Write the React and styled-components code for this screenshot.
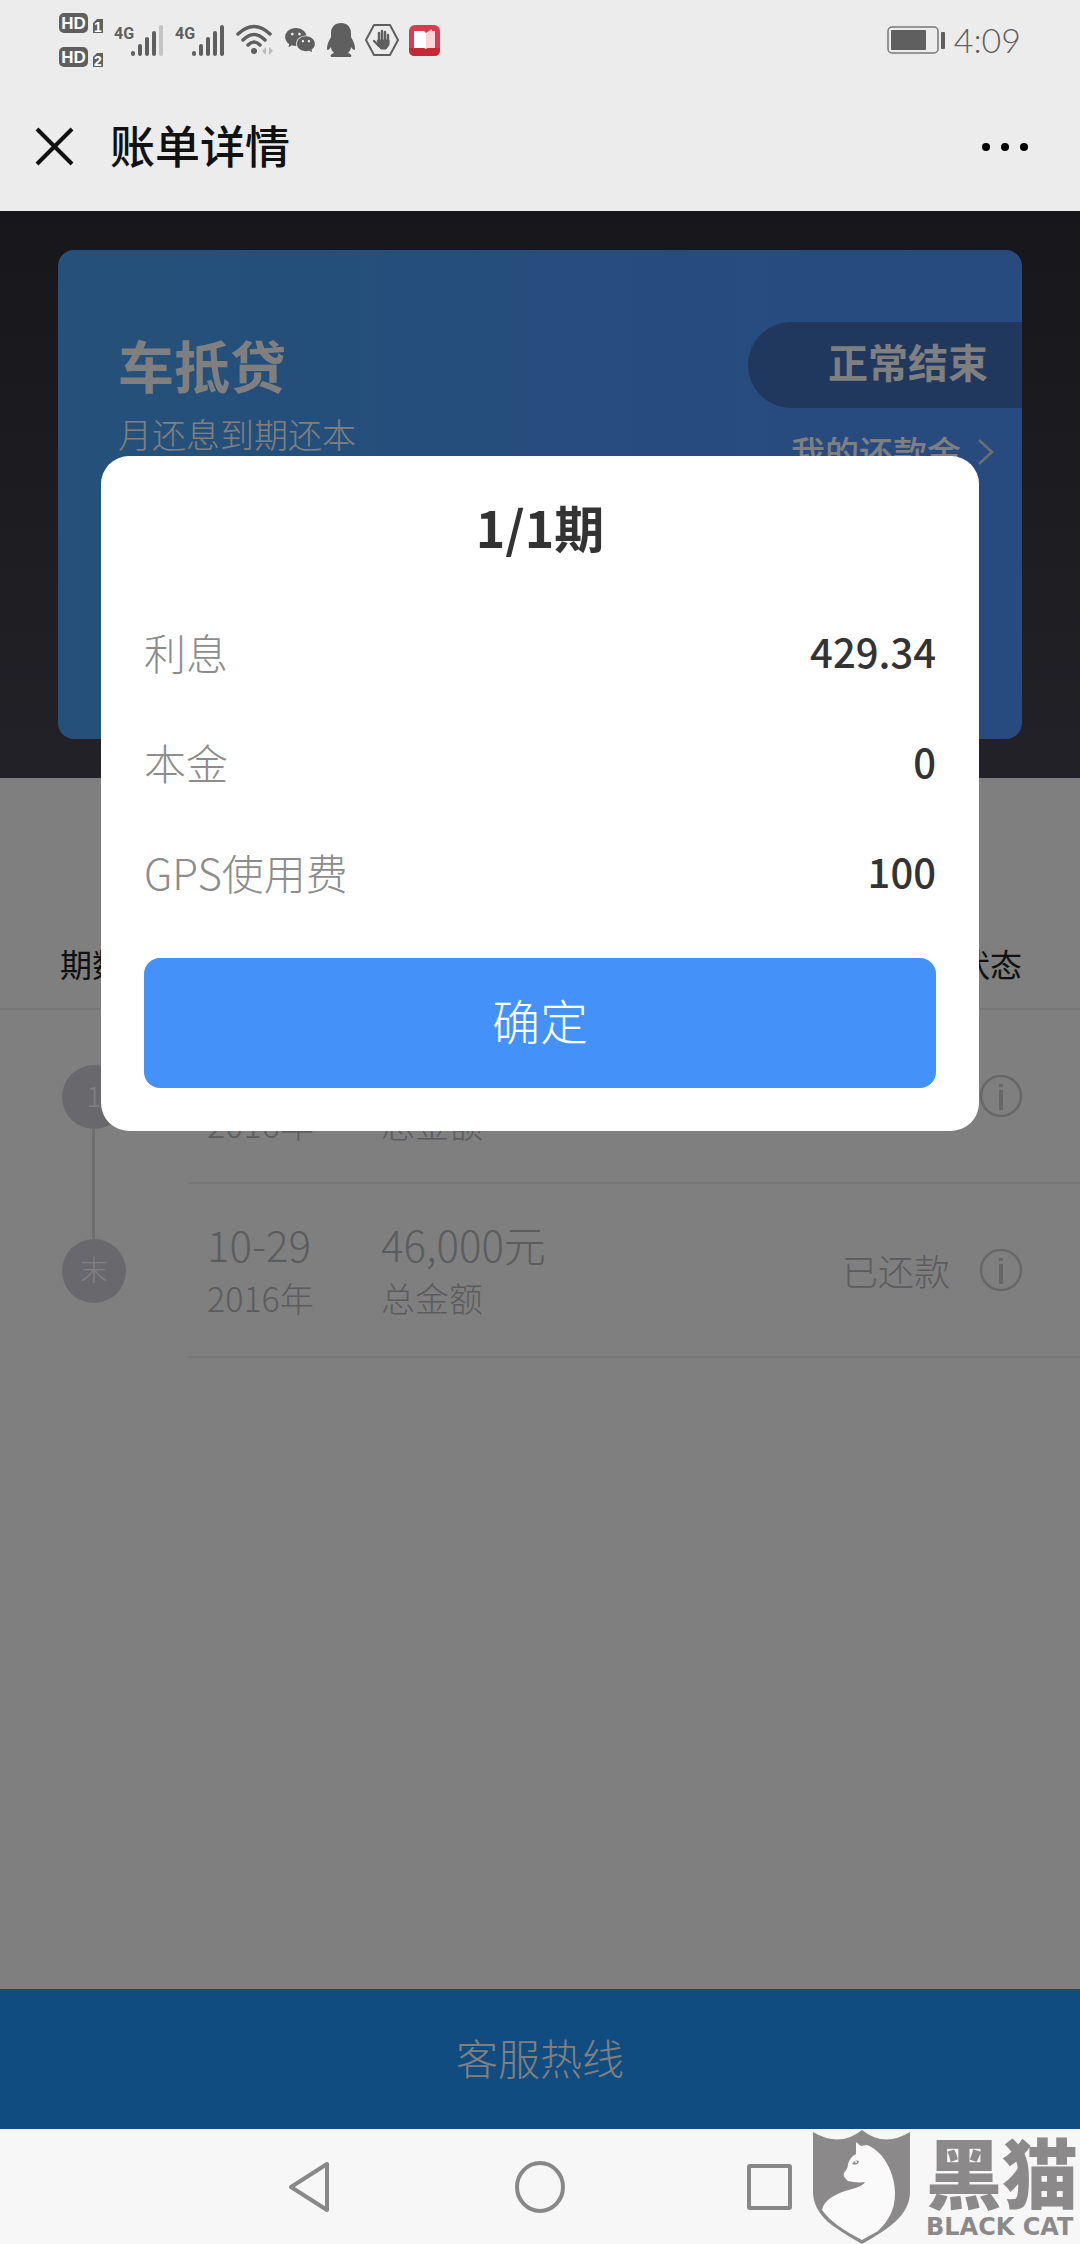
import React, { useState } from 'react'
import styled, { createGlobalStyle } from 'styled-components'
import { AiFillWechat } from 'react-icons/ai'

const GlobalStyle = createGlobalStyle`
  * {
    box-sizing: border-box;
  }

  body {
    margin: 0;
    background: #fff;
    font-family: "Noto Sans CJK SC", "Noto Sans", sans-serif;
    font-weight: 300;
  }

  button {
    padding: 0;
    border: 0;
    background: none;
    color: inherit;
    font: inherit;
    cursor: pointer;
  }

  svg {
    display: block;
    flex: none;
  }
`

const Screen = styled.div`
  position: relative;
  display: flex;
  flex-direction: column;
  min-height: 100vh;
  overflow: hidden;
`

const StatusBar = styled.div`
  display: flex;
  align-items: center;
  justify-content: space-between;
  height: 80px;
  padding: 0 59px;
  background: #ececec;
  color: #5f5f5f;
`

const StatusIcons = styled.div`
  display: flex;
  align-items: center;
  gap: 10px;
`

const Clock = styled.div`
  display: flex;
  align-items: center;
  gap: 8px;
  font-family: Lato, sans-serif;
  font-size: 34px;
  line-height: 40px;
`

const TitleBar = styled.header`
  display: flex;
  align-items: center;
  height: 131px;
  padding: 2px 51px 0 34px;
  background: #ececec;
  color: #111;

  h1 {
    flex: 1;
    margin: 0 0 4px 35px;
    font-size: 45px;
    font-weight: 500;
    line-height: 64px;
  }
`

const WebView = styled.div`
  position: relative;
  display: flex;
  flex: 1;
  flex-direction: column;
`

const Hero = styled.section`
  padding: 39px 58px;
  background: linear-gradient(#2f2e35, #44434f);
`

const LoanCard = styled.div`
  display: flex;
  justify-content: space-between;
  min-height: 489px;
  border-radius: 16px;
  background: linear-gradient(90deg, #48a2f4, #5094ff);
  color: #fff;
`

const LoanName = styled.div`
  padding: 82px 0 0 60px;

  h2 {
    margin: 0 0 18px;
    font-size: 56px;
    font-weight: 700;
    line-height: 64px;
  }

  p {
    margin: 0;
    font-size: 34px;
    line-height: 40px;
  }
`

const LoanStatus = styled.div`
  display: flex;
  flex-direction: column;
  align-items: flex-end;
  gap: 24px;
  padding-top: 72px;
`

const StatusPill = styled.div`
  padding: 0 34px 8px 80px;
  border-radius: 43px 0 0 43px;
  background: #4070bc;
  font-size: 40px;
  font-weight: 700;
  line-height: 78px;
`

const FundLink = styled.a`
  display: flex;
  align-items: center;
  gap: 16px;
  padding-right: 28px;
  color: #fff;
  font-size: 34px;
  font-weight: 500;
  line-height: 40px;
  text-decoration: none;
`

const BillTable = styled.table`
  width: 100%;
  margin-top: 148px;
  border-collapse: separate;
  border-spacing: 0;
  color: #b8b8bd;
  text-align: left;

  th {
    height: 84px;
    padding: 0 0 8px;
    border-bottom: 2px solid #eee;
    color: #222;
    font-size: 32px;
    font-weight: 400;
    line-height: 40px;
  }

  th:first-child {
    padding-left: 60px;
  }

  th:last-child {
    padding-right: 58px;
    text-align: right;
  }
`

const BillRow = styled.tr`
  td {
    height: 174px;
    padding: 0;
    border-bottom: 2px solid #eee;
  }

  td:first-child {
    width: 188px;
    border-bottom: 0;
  }
`

const Step = styled.div`
  position: relative;
  width: 64px;
  height: 64px;
  margin-left: 62px;
  border-radius: 50%;
  background: #d2d1d9;
  color: #fff;
  font-size: 28px;
  line-height: 60px;
  text-align: center;

  &::after {
    content: "";
    position: absolute;
    top: 64px;
    left: 30px;
    display: ${props => (props.$linked ? 'block' : 'none')};
    width: 3px;
    height: 110px;
    background: #dddde3;
  }
`

const BillCell = styled.td`
  width: ${props => props.$width};

  div {
    padding-left: ${props => props.$indent};
    font-size: 42px;
    line-height: 56px;
  }

  div + div {
    font-size: 34px;
    line-height: 52px;
  }
`

const PaidState = styled.div`
  display: flex;
  align-items: center;
  justify-content: flex-end;
  gap: 29px;
  padding-right: 57px;
  font-size: 36px;
`

const Hotline = styled.a`
  margin-top: auto;
  padding-bottom: 4px;
  background: #2098fe;
  color: #fff;
  font-size: 42px;
  line-height: 136px;
  text-align: center;
  text-decoration: none;
`

const Overlay = styled.div`
  position: absolute;
  inset: 0;
  display: flex;
  align-items: flex-start;
  padding: 245px 101px 0;
  background: rgba(0, 0, 0, 0.5);
`

const Dialog = styled.div`
  flex: 1;
  padding: 38px 43px 43px;
  border-radius: 28px;
  background: #fff;

  h2 {
    margin: 0 0 38px;
    color: #333;
    font-size: 50px;
    font-weight: 700;
    line-height: 64px;
    text-align: center;
  }

  dl {
    margin: 0;
  }
`

const FeeRow = styled.div`
  display: flex;
  align-items: center;
  justify-content: space-between;
  height: 110px;
  font-size: 42px;

  dt {
    color: #8c8c8c;
  }

  dd {
    margin: 0;
    color: #333;
    font-size: 40px;
    font-weight: 500;
  }
`

const ConfirmButton = styled.button`
  && {
    width: 100%;
    height: 130px;
    margin-top: 32px;
    padding-bottom: 8px;
    border-radius: 16px;
    background: #4491fa;
    color: #fff;
    font-size: 48px;
  }
`

const NavBar = styled.nav`
  display: grid;
  grid-template-columns: repeat(3, 230px);
  justify-content: center;
  justify-items: center;
  align-items: center;
  height: 115px;
  background: #f7f7f7;
`

const Watermark = styled.div`
  position: absolute;
  right: 2px;
  bottom: 0;
  display: flex;
  align-items: flex-start;
  gap: 15px;
  height: 114px;
  color: #8b898a;
`

const Brand = styled.div`
  font-size: 76px;
  font-weight: 900;
  line-height: 80px;

  small {
    display: block;
    font-family: "DejaVu Sans", sans-serif;
    font-size: 24px;
    font-weight: 700;
    line-height: 34px;
  }
`

const HdIcon = ({ lines }) => (
  <svg width="45" height="58" viewBox="0 0 45 58" fill="#5f5f5f">
    {lines.map((n, i) => (
      <g key={n} transform={`translate(0 ${i * 34})`}>
        <rect y="2" width="29" height="20" rx="5" />
        <text x="14.5" y="18" fill="#fff" fontFamily="Liberation Sans" fontSize="17" fontWeight="700" textAnchor="middle">HD</text>
        <path d="M34 12l4-4h6v14H34z" />
        <text x="39" y="21" fill="#fff" fontFamily="Liberation Sans" fontSize="14" fontWeight="700" textAnchor="middle">{n}</text>
      </g>
    ))}
  </svg>
)

const SignalIcon = ({ weak }) => (
  <svg width="51" height="34" viewBox="0 0 51 34" fill="none" stroke="#5f5f5f" strokeWidth="4" strokeLinecap="round">
    <text x="0" y="16" fill="#5f5f5f" stroke="none" fontFamily="Roboto" fontSize="16" fontWeight="700">4G</text>
    <path d="M19 30v1M26 23v8M33 16v15M40 10v21" />
    <path d="M47 4v27" stroke={weak ? '#c4c4c4' : '#5f5f5f'} />
  </svg>
)

const WifiIcon = () => (
  <svg width="37" height="32" viewBox="0 0 37 32" fill="none" stroke="#5f5f5f" strokeWidth="3.5" strokeLinecap="round">
    <path d="M2 10Q18 -5 34 10M7 16Q18 5 29 16M12 21Q18 15 24 21" />
    <circle cx="18" cy="27" r="3" fill="#5f5f5f" stroke="none" />
    <path d="M30 23l-4 4 4 4zM33 23l4 4-4 4z" fill="#bbb" stroke="none" />
  </svg>
)

const PenguinIcon = () => (
  <svg width="28" height="34" viewBox="0 0 28 34" fill="#5f5f5f">
    <path d="M14 0C8 0 4 4 4 10v4C1 19 0 22 0 26c0 2 2 1 4-2 0 2 1 4 3 6-3 1-4 2-3 4h20c1-2 0-3-3-4 2-2 3-4 3-6 2 3 4 4 4 2 0-4-1-7-4-12v-4C24 4 20 0 14 0z" />
  </svg>
)

const HandIcon = () => (
  <svg width="34" height="32" viewBox="0 0 34 32" fill="none" stroke="#5f5f5f" strokeLinecap="round" strokeLinejoin="round">
    <path d="M9 1h16l8 15-8 15H9L1 16z" strokeWidth="2" />
    <path d="M14 9v9M17 7v10M20 8v10M23 11v8M9 17l5 5" strokeWidth="2.4" />
    <path d="M13 16h11v5l-3 4h-5l-4-4z" fill="#5f5f5f" strokeWidth="1" />
  </svg>
)

const BookIcon = () => (
  <svg width="31" height="31" viewBox="0 0 31 31">
    <rect width="31" height="31" rx="6" fill="#d73c50" />
    <path d="M0 23h31v2q0 6-6 6H6q-6 0-6-6z" fill="#c32a35" />
    <path d="M5 6h10l2 2v16l-2-1H5z" fill="#fff" />
    <path d="M17 8l6-4v2h3v17h-7l-2 1z" fill="#fbd5d9" />
  </svg>
)

const BatteryIcon = () => (
  <svg width="59" height="28" viewBox="0 0 59 28" fill="#5f5f5f">
    <rect x="1" y="1" width="50" height="26" rx="4" fill="none" stroke="#777" strokeWidth="1.5" />
    <rect x="4" y="4" width="35" height="20" rx="1" />
    <rect x="54" y="6" width="4" height="17" rx="1" />
  </svg>
)

const CloseIcon = () => (
  <svg width="41" height="41" viewBox="0 0 41 41" fill="none" stroke="#111" strokeWidth="4">
    <path d="M3 3l35 35M38 3L3 38" />
  </svg>
)

const MoreIcon = () => (
  <svg width="48" height="10" viewBox="0 0 48 10" fill="#000">
    <circle cx="5" cy="5" r="4" />
    <circle cx="24" cy="5" r="4" />
    <circle cx="43" cy="5" r="4" />
  </svg>
)

const ChevronIcon = () => (
  <svg width="17" height="28" viewBox="0 0 17 28" fill="none" stroke="#ddd" strokeWidth="2.5">
    <path d="M2 2l13 12L2 26" />
  </svg>
)

const InfoIcon = () => (
  <svg width="44" height="44" viewBox="0 0 44 44" fill="none" stroke="#ceced2" strokeWidth="2.5">
    <circle cx="22" cy="22" r="20" />
    <path d="M22 16v20M22 10v3" strokeWidth="4" />
  </svg>
)

const ShieldIcon = () => (
  <svg width="98" height="114" viewBox="0 0 98 114">
    <path d="M0 2Q27 18 49 0Q71 18 97 2V62Q97 78 82 92Q72 101 49 114Q26 101 15 92Q0 78 0 62z" fill="#8b898a" />
    <path d="M43 12l5 4 6-1C72 22 82 45 82 63c0 18-7 28-17 38l-16 9C30 100 17 91 9 80c2-10 12-15 23-19 10-3 17-4 20-9-6 1-12 0-17-1-4-4-5-5-4-8 2-3 4-5 4-9 1-4 4-8 8-10z" fill="#fafafa" />
    <path d="M39 34q3-5 7-3-1 5-7 3z" fill="#8b898a" />
    <circle cx="43" cy="32" r="1" fill="#fff" />
  </svg>
)

const fees = [
  { label: '利息', value: '429.34' },
  { label: '本金', value: '0' },
  { label: 'GPS使用费', value: '100' }
]

const bills = [
  { step: '1', date: '10-29', year: '2016年', amount: '529元' },
  { step: '末', date: '10-29', year: '2016年', amount: '46,000元' }
]

const App = () => {
  const [open, setOpen] = useState(true)

  return (
    <Screen>
      <GlobalStyle />
      <StatusBar>
        <StatusIcons>
          <HdIcon lines={[1, 2]} />
          <SignalIcon weak />
          <SignalIcon />
          <WifiIcon />
          <AiFillWechat size={34} />
          <PenguinIcon />
          <HandIcon />
          <BookIcon />
        </StatusIcons>
        <Clock>
          <BatteryIcon />
          4:09
        </Clock>
      </StatusBar>
      <TitleBar>
        <button type="button" aria-label="关闭">
          <CloseIcon />
        </button>
        <h1>账单详情</h1>
        <button type="button" aria-label="更多">
          <MoreIcon />
        </button>
      </TitleBar>

      <WebView>
        <Hero>
          <LoanCard>
            <LoanName>
              <h2>车抵贷</h2>
              <p>月还息到期还本</p>
            </LoanName>
            <LoanStatus>
              <StatusPill>正常结束</StatusPill>
              <FundLink href="#fund">
                我的还款金
                <ChevronIcon />
              </FundLink>
            </LoanStatus>
          </LoanCard>
        </Hero>

        <BillTable>
          <thead>
            <tr>
              <th>期数</th>
              <th>日期</th>
              <th>金额</th>
              <th>状态</th>
            </tr>
          </thead>
          <tbody>
            {bills.map((bill, i) => (
              <BillRow key={bill.step}>
                <td>
                  <Step $linked={i < bills.length - 1}>{bill.step}</Step>
                </td>
                <BillCell $width="193px" $indent="19px">
                  <div>{bill.date}</div>
                  <div>{bill.year}</div>
                </BillCell>
                <BillCell $width="auto" $indent="0">
                  <div>{bill.amount}</div>
                  <div>总金额</div>
                </BillCell>
                <td>
                  <PaidState>
                    已还款
                    <button type="button" aria-label="查看明细" onClick={() => setOpen(true)}>
                      <InfoIcon />
                    </button>
                  </PaidState>
                </td>
              </BillRow>
            ))}
          </tbody>
        </BillTable>

        <Hotline href="#hotline">客服热线</Hotline>

        {open && (
          <Overlay>
            <Dialog role="dialog" aria-labelledby="dialog-title">
              <h2 id="dialog-title">1/1期</h2>
              <dl>
                {fees.map(fee => (
                  <FeeRow key={fee.label}>
                    <dt>{fee.label}</dt>
                    <dd>{fee.value}</dd>
                  </FeeRow>
                ))}
              </dl>
              <ConfirmButton type="button" onClick={() => setOpen(false)}>
                确定
              </ConfirmButton>
            </Dialog>
          </Overlay>
        )}
      </WebView>

      <NavBar>
        <button type="button" aria-label="返回">
          <svg width="44" height="54" viewBox="0 0 44 54" fill="none" stroke="#888" strokeWidth="4" strokeLinejoin="round">
            <path d="M3 27L39 4v46z" />
          </svg>
        </button>
        <button type="button" aria-label="主页">
          <svg width="50" height="54" viewBox="0 0 50 54" fill="none" stroke="#888" strokeWidth="4">
            <ellipse cx="25" cy="27" rx="23" ry="24" />
          </svg>
        </button>
        <button type="button" aria-label="最近任务">
          <svg width="46" height="50" viewBox="0 0 46 50" fill="none" stroke="#888" strokeWidth="4" strokeLinejoin="round">
            <rect x="2" y="4" width="41" height="42" rx="1" />
          </svg>
        </button>
      </NavBar>

      <Watermark>
        <ShieldIcon />
        <Brand>
          黑猫
          <small>BLACK CAT</small>
        </Brand>
      </Watermark>
    </Screen>
  )
}

export default App
